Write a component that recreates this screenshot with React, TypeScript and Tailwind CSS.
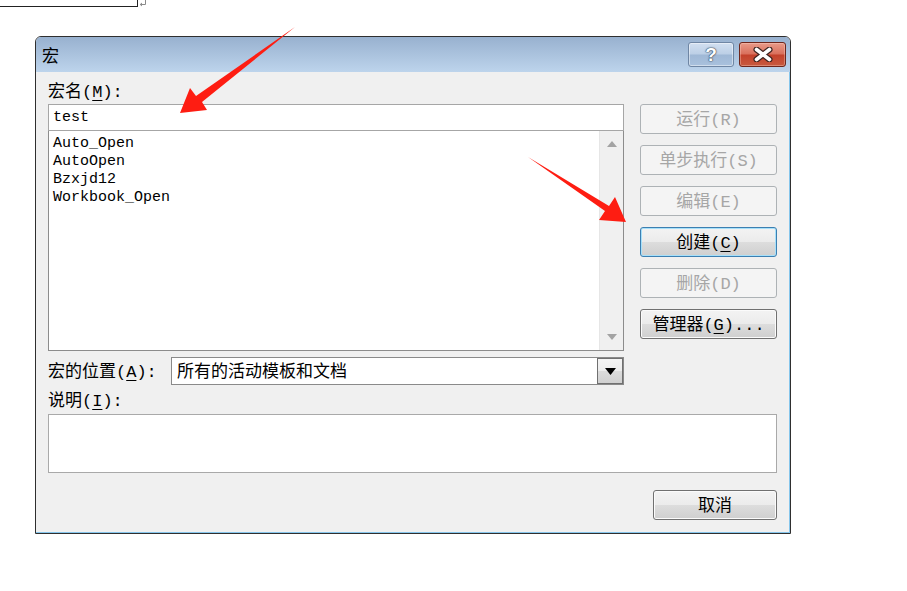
const FONT = "[font-family:'Liberation_Mono','Noto_Sans_CJK_SC',monospace]"

function Btn({
  children,
  disabled,
  focused,
  className = "",
}: {
  children: React.ReactNode
  disabled?: boolean
  focused?: boolean
  className?: string
}) {
  if (disabled) {
    return (
      <div
        className={`flex h-[30px] items-center justify-center rounded-[3px] border border-[#adb2b5] bg-[#f4f4f4] pt-[3px] text-[#a6a6a6] ${className}`}
      >
        {children}
      </div>
    )
  }
  return (
    <div
      className={`flex h-[30px] items-center justify-center rounded-[3px] border bg-[linear-gradient(#f3f3f3_0%,#ebebeb_50%,#dddddd_50%,#cfcfcf_100%)] pt-[3px] text-black ${
        focused
          ? "border-[#3c7fb1] shadow-[inset_0_0_0_1px_#a6e0fa]"
          : "border-[#707070] shadow-[inset_0_0_0_1px_#fbfbfb]"
      } ${className}`}
    >
      {children}
    </div>
  )
}

const U = ({ c }: { c: string }) => (
  <span className="underline decoration-1 underline-offset-[3px]">{c}</span>
)

export default function App() {
  const macros = ["Auto_Open", "AutoOpen", "Bzxjd12", "Workbook_Open"]

  return (
    <div className={`relative h-[591px] w-[907px] overflow-hidden bg-white text-[17px] ${FONT}`}>
      {/* bit of the document above the dialog */}
      <div className="flex h-[7px] items-start">
        <div className="h-[7px] w-[138px] border-b border-r border-[#222]" />
        <svg width="8" height="7" viewBox="0 0 8 7" className="ml-[1px]">
          <path d="M6.5 0 V4.5 H1.5 M3 3 L1.2 4.5 L3 6" fill="none" stroke="#8a8a8a" strokeWidth="1" />
        </svg>
      </div>

      {/* dialog */}
      <div className="ml-[35px] mt-[29px] flex h-[498px] w-[756px] flex-col overflow-hidden rounded-t-[6px] border border-[#2f2f2f]">
        {/* title bar */}
        <div className="flex h-[35px] shrink-0 items-start bg-[linear-gradient(#98b1cf,#bdd4ec)] pr-[4px] pt-[5px]">
          <div className="self-center pl-[6px] pt-[2px] text-[17px] text-black">宏</div>
          <div className="ml-auto flex gap-[5px]">
            <div className="flex h-[25px] w-[46px] items-center justify-center rounded-[3px] border border-[#6f86a4] bg-[linear-gradient(#d2e0f1_0%,#bccfe6_48%,#9fb8d6_52%,#a9c1dd_100%)] shadow-[inset_0_0_0_1px_rgba(255,255,255,0.45)]">
              <span className="text-[19px] font-bold leading-none text-white [font-family:'Liberation_Sans',sans-serif] [text-shadow:0_0_1px_#39485c,0_0_1px_#39485c,0_0_2px_#39485c]">
                ?
              </span>
            </div>
            <div className="flex h-[25px] w-[47px] items-center justify-center rounded-[3px] border border-[#6e261c] bg-[linear-gradient(#e99a89_0%,#d9705c_48%,#c4412b_52%,#c85a3f_100%)] shadow-[inset_0_0_0_1px_rgba(255,220,210,0.35)]">
              <svg width="22" height="15" viewBox="0 0 22 15">
                <path d="M4.5 2.5 L17.5 12.5 M17.5 2.5 L4.5 12.5" stroke="#3d2420" strokeWidth="6" strokeLinecap="round" />
                <path d="M4.5 2.5 L17.5 12.5 M17.5 2.5 L4.5 12.5" stroke="#ffffff" strokeWidth="3.6" strokeLinecap="round" />
              </svg>
            </div>
          </div>
        </div>

        {/* body */}
        <div className="flex flex-1 flex-col border-b border-r border-[#86c6ec] bg-[#f0f0f0] px-[12px] pt-[8px]">
          <div className="flex gap-[16px]">
            <div className="flex w-[576px] flex-col">
              <div className="h-[22px] pt-[2px] leading-[22px]">
                宏名(<U c="M" />):
              </div>
              <div className="mt-[2px] flex h-[27px] items-center border border-[#a6a6a6] bg-white pl-[4px] pt-[2px] text-[15px]">
                test
              </div>
              <div className="flex h-[220px] border border-t-0 border-[#8c8c8c] bg-white">
                <div className="flex-1 pl-[4px] pt-[4px] text-[15px] leading-[18px]">
                  {macros.map((m) => (
                    <div key={m}>{m}</div>
                  ))}
                </div>
                <div className="flex w-[24px] flex-col items-center justify-between border-l border-[#e6e6e6] bg-[#f0f0f0] py-[10px]">
                  <svg width="10" height="6" viewBox="0 0 10 6">
                    <path d="M5 0 L10 6 H0 Z" fill="#a3a3a3" />
                  </svg>
                  <svg width="10" height="6" viewBox="0 0 10 6">
                    <path d="M0 0 H10 L5 6 Z" fill="#a3a3a3" />
                  </svg>
                </div>
              </div>
              <div className="mt-[6px] flex h-[28px] items-center">
                <div className="w-[123px] pt-[3px]">
                  宏的位置(<U c="A" />):
                </div>
                <div className="flex h-full flex-1 items-center border border-[#8a8a8a] bg-white">
                  <div className="flex-1 pl-[5px] pt-[3px]">所有的活动模板和文档</div>
                  <div className="flex h-full w-[26px] items-center justify-center border border-[#707070] bg-[linear-gradient(#f4f4f4_0%,#ececec_50%,#dcdcdc_50%,#d0d0d0_100%)]">
                    <svg width="11" height="7" viewBox="0 0 11 7">
                      <path d="M0 0 H11 L5.5 7 Z" fill="#000" />
                    </svg>
                  </div>
                </div>
              </div>
            </div>

            <div className="flex w-[137px] flex-col gap-[11px] pt-[24px]">
              <Btn disabled>运行(R)</Btn>
              <Btn disabled>单步执行(S)</Btn>
              <Btn disabled>编辑(E)</Btn>
              <Btn focused>
                创建(<U c="C" />)
              </Btn>
              <Btn disabled>删除(D)</Btn>
              <Btn>
                管理器(<U c="G" />)...
              </Btn>
            </div>
          </div>

          <div className="mt-[4px] h-[22px] pt-[2px] leading-[22px]">
            说明(<U c="I" />):
          </div>
          <div className="mt-[3px] h-[59px] w-[729px] border border-[#a9a9a9] bg-white" />

          <div className="mt-[17px] flex justify-end">
            <Btn className="w-[124px]">取消</Btn>
          </div>
        </div>
      </div>

      {/* red annotation arrows */}
      <svg
        className="pointer-events-none absolute inset-0"
        width="907"
        height="591"
        viewBox="0 0 907 591"
      >
        <path d="M295 27 L202 102 L207 110 L180 113 L190 88 L196 96 Z" fill="#fe1d12" />
        <path d="M528 157 L609 206 L615 197 L626 222 L599 220 L605 211 Z" fill="#fe1d12" />
      </svg>
    </div>
  )
}
